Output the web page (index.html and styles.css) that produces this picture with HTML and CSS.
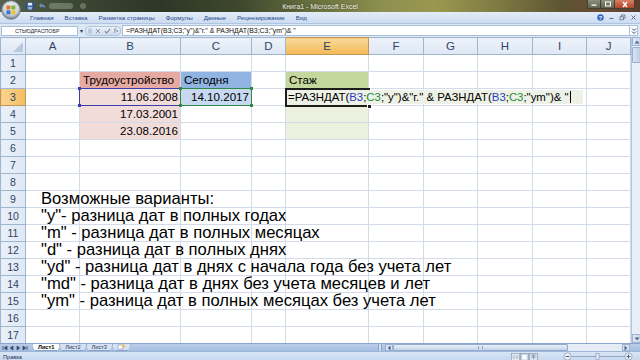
FILE: index.html
```html
<!DOCTYPE html>
<html lang="ru">
<head>
<meta charset="utf-8">
<title>Книга1 - Microsoft Excel</title>
<link rel="stylesheet" href="styles.css">
</head>
<body>
<div class="app">
  <div class="office-btn">
    <svg width="20" height="20" viewBox="0 0 20 20">
      <defs>
        <radialGradient id="og" cx="50%" cy="35%" r="60%">
          <stop offset="0" stop-color="#f4f6f8"/>
          <stop offset="0.7" stop-color="#c9d2da"/>
          <stop offset="1" stop-color="#7f8a94"/>
        </radialGradient>
      </defs>
      <circle cx="10" cy="10" r="9.3" fill="url(#og)" stroke="#6d7780" stroke-width="0.8"/>
      <rect x="5.5" y="5.5" width="4" height="4" fill="#e8742a"/>
      <rect x="10.3" y="5.5" width="4" height="4" fill="#7cb342"/>
      <rect x="5.5" y="10.3" width="4" height="4" fill="#2f7bd1"/>
      <rect x="10.3" y="10.3" width="4" height="4" fill="#f2c230"/>
    </svg>
  </div>

  <header class="titlebar">
    <div class="qat">
      <svg width="8" height="8" viewBox="0 0 8 8"><rect x="0.5" y="0.5" width="7" height="7" rx="1" fill="#3f6db8" stroke="#1d3d78" stroke-width="0.6"/><rect x="2" y="0.8" width="4" height="2.6" fill="#e9eef6"/><rect x="2" y="5" width="4" height="2.5" fill="#9ab0d0"/></svg>
      <svg width="9" height="8" viewBox="0 0 9 8"><path d="M2 3.5 L4.5 1 L4.5 2.6 C7 2.6 8.3 4 8.3 6.8 C7.4 5.2 6.3 4.6 4.5 4.6 L4.5 6 Z" fill="#6f8fbf"/></svg>
      <span class="qat-blur"></span>
      <span class="qat-sep"></span>
    </div>
    <div class="title">Книга1 - Microsoft Excel</div>
    <div class="winctl">
      <span class="wbtn"><svg width="8" height="6" viewBox="0 0 8 6"><rect x="1.5" y="3.5" width="5" height="1.3" fill="#fff"/></svg></span>
      <span class="wbtn"><svg width="8" height="6" viewBox="0 0 8 6"><rect x="1.5" y="1" width="5" height="4" fill="none" stroke="#fff" stroke-width="1"/></svg></span>
      <span class="wbtn close"><svg width="10" height="7" viewBox="0 0 10 7"><path d="M3 1 L7 6 M7 1 L3 6" stroke="#fff" stroke-width="1.4"/></svg></span>
    </div>
  </header>

  <nav class="ribbon">
    <div class="rtabs">
      <span>Главная</span>
      <span>Вставка</span>
      <span>Разметка страницы</span>
      <span>Формулы</span>
      <span>Данные</span>
      <span>Рецензирование</span>
      <span>Вид</span>
    </div>
    <div class="rctl">
      <svg width="7" height="7" viewBox="0 0 7 7"><circle cx="3.5" cy="3.5" r="3.2" fill="#2f63c0"/><text x="3.5" y="5.6" font-size="5.5" font-family="Liberation Sans, sans-serif" font-weight="bold" fill="#fff" text-anchor="middle">?</text></svg>
      <svg width="7" height="7" viewBox="0 0 7 7"><rect x="1.5" y="4" width="4" height="1" fill="#5b6f8c"/></svg>
      <svg width="7" height="7" viewBox="0 0 7 7"><rect x="2.5" y="1" width="3.5" height="3" fill="none" stroke="#5b6f8c" stroke-width="0.8"/><rect x="1" y="2.8" width="3.5" height="3" fill="#dbe6f4" stroke="#5b6f8c" stroke-width="0.8"/></svg>
      <svg width="7" height="7" viewBox="0 0 7 7"><path d="M1.5 1.5 L5.5 5.5 M5.5 1.5 L1.5 5.5" stroke="#5b6f8c" stroke-width="1"/></svg>
    </div>
  </nav>

  <div class="fbar">
    <div class="namebox">СТЬЮДРАСПОБР</div>
    <span class="nbarrow">▾</span>
    <div class="fbtns">
      <span class="grip"></span>
      <svg width="6" height="6" viewBox="0 0 6 6"><path d="M1 1 L5 5 M5 1 L1 5" stroke="#8a94a3" stroke-width="1"/></svg>
      <svg width="7" height="6" viewBox="0 0 7 6"><path d="M0.8 3.2 L2.6 5 L6.2 0.8" stroke="#7f8896" stroke-width="1.1" fill="none"/></svg>
      <span class="fx"><i>f</i><sub>x</sub></span>
    </div>
    <div class="finput">=РАЗНДАТ(B3;C3;"y")&amp;"г." &amp; РАЗНДАТ(B3;C3;"ym")&amp; "</div>
    <div class="fexp"><svg width="6" height="8" viewBox="0 0 6 8"><path d="M1 1.5 L3 3.5 L5 1.5 M1 4.5 L3 6.5 L5 4.5" stroke="#3b4a60" stroke-width="1" fill="none"/></svg></div>
  </div>

  <div class="sheet">
    <table class="grid">
      <colgroup>
        <col class="c-rh"><col class="c-a"><col class="c-b"><col class="c-c"><col class="c-d"><col class="c-e"><col class="c-f"><col class="c-g"><col class="c-h"><col class="c-i"><col class="c-j">
      </colgroup>
      <thead>
        <tr>
          <th class="corner"><span class="tri"></span></th>
          <th>A</th><th>B</th><th>C</th><th>D</th><th class="hl">E</th><th>F</th><th>G</th><th>H</th><th>I</th><th>J</th>
        </tr>
      </thead>
      <tbody>
        <tr><th>1</th><td></td><td></td><td></td><td></td><td></td><td></td><td></td><td></td><td></td><td></td></tr>
        <tr><th>2</th><td></td><td class="red-h">Трудоустройство</td><td class="blue-h">Сегодня</td><td></td><td class="green-h">Стаж</td><td></td><td></td><td></td><td></td><td></td></tr>
        <tr><th class="hl">3</th><td></td>
          <td class="red-l num ref"><span class="refbox refb"><i class="k tl"></i><i class="k tr"></i><i class="k bl"></i><i class="k br"></i></span>11.06.2008</td>
          <td class="blue-l num ref"><span class="refbox refc"><i class="k tl"></i><i class="k tr"></i><i class="k bl"></i><i class="k br"></i></span>14.10.2017</td>
          <td></td>
          <td class="green-l active"><span class="activebox"></span><span class="fillhandle"></span><div class="editor">=РАЗНДАТ(<b class="rb">B3</b>;<b class="rc">C3</b>;"y")&amp;"г." &amp; РАЗНДАТ(<b class="rb">B3</b>;<b class="rc">C3</b>;"ym")&amp; "<span class="caret"></span></div></td>
          <td></td><td></td><td></td><td></td><td></td></tr>
        <tr><th>4</th><td></td><td class="red-l num">17.03.2001</td><td></td><td></td><td class="green-l"></td><td></td><td></td><td></td><td></td><td></td></tr>
        <tr><th>5</th><td></td><td class="red-l num">23.08.2016</td><td></td><td></td><td class="green-l"></td><td></td><td></td><td></td><td></td><td></td></tr>
        <tr><th>6</th><td></td><td></td><td></td><td></td><td></td><td></td><td></td><td></td><td></td><td></td></tr>
        <tr><th>7</th><td></td><td></td><td></td><td></td><td></td><td></td><td></td><td></td><td></td><td></td></tr>
        <tr><th>8</th><td></td><td></td><td></td><td></td><td></td><td></td><td></td><td></td><td></td><td></td></tr>
        <tr><th>9</th><td class="note">Возможные варианты:</td><td></td><td></td><td></td><td></td><td></td><td></td><td></td><td></td><td></td></tr>
        <tr><th>10</th><td class="note">"y"- разница дат в полных годах</td><td></td><td></td><td></td><td></td><td></td><td></td><td></td><td></td><td></td></tr>
        <tr><th>11</th><td class="note">"m" - разница дат в полных месяцах</td><td></td><td></td><td></td><td></td><td></td><td></td><td></td><td></td><td></td></tr>
        <tr><th>12</th><td class="note">"d" - разница дат в полных днях</td><td></td><td></td><td></td><td></td><td></td><td></td><td></td><td></td><td></td></tr>
        <tr><th>13</th><td class="note">"yd" - разница дат в днях с начала года без учета лет</td><td></td><td></td><td></td><td></td><td></td><td></td><td></td><td></td><td></td></tr>
        <tr><th>14</th><td class="note">"md" - разница дат в днях без учета месяцев и лет</td><td></td><td></td><td></td><td></td><td></td><td></td><td></td><td></td><td></td></tr>
        <tr><th>15</th><td class="note">"ym" - разница дат в полных месяцах без учета лет</td><td></td><td></td><td></td><td></td><td></td><td></td><td></td><td></td><td></td></tr>
        <tr><th>16</th><td></td><td></td><td></td><td></td><td></td><td></td><td></td><td></td><td></td><td></td></tr>
        <tr><th>17</th><td></td><td></td><td></td><td></td><td></td><td></td><td></td><td></td><td></td><td></td></tr>
      </tbody>
    </table>
    <div class="vscroll">
      <span class="sbtn"><svg width="6" height="4" viewBox="0 0 6 4"><path d="M0.5 3.5 L3 0.8 L5.5 3.5 Z" fill="#4d6185"/></svg></span>
      <span class="vthumb"></span>
      <span class="vtrack"></span>
      <span class="sbtn"><svg width="6" height="4" viewBox="0 0 6 4"><path d="M0.5 0.5 L3 3.2 L5.5 0.5 Z" fill="#4d6185"/></svg></span>
    </div>
  </div>

  <div class="tabbar">
    <div class="tabnav">
      <svg width="28" height="6" viewBox="0 0 28 6"><path d="M1 1 V5 M5 1 L2.2 3 L5 5 Z M11 1 L8.2 3 L11 5 Z M15 1 L17.8 3 L15 5 Z M21 1 L23.8 3 L21 5 Z M25 1 V5" stroke="#3c4f70" stroke-width="0.8" fill="#3c4f70"/></svg>
    </div>
    <div class="tabs">
      <span class="tab on">Лист1</span>
      <span class="tab">Лист2</span>
      <span class="tab">Лист3</span>
      <span class="tab add"><svg width="9" height="6" viewBox="0 0 9 6"><rect x="1" y="1" width="5" height="4" fill="#fff" stroke="#7f93b3" stroke-width="0.6"/><circle cx="6.5" cy="2" r="1.6" fill="#f2b84a"/></svg></span>
    </div>
    <div class="hscroll">
      <span class="hsplit"></span>
      <span class="hbtn"><svg width="4" height="6" viewBox="0 0 4 6"><path d="M3.5 0.5 L0.8 3 L3.5 5.5 Z" fill="#4d6185"/></svg></span>
      <span class="hthumb"><i></i></span>
      <span class="htrack"></span>
      <span class="hbtn"><svg width="4" height="6" viewBox="0 0 4 6"><path d="M0.5 0.5 L3.2 3 L0.5 5.5 Z" fill="#4d6185"/></svg></span>
    </div>
  </div>

  <footer class="status">
    <span class="mode">Правка</span>
    <div class="views">
      <svg width="28" height="8" viewBox="0 0 28 8"><rect x="0.5" y="0.5" width="8" height="7" fill="#f4f7fb" stroke="#7d8fab" stroke-width="0.6"/><path d="M3 1 V7 M6 1 V7 M1 3 H8 M1 5 H8" stroke="#8b9bb5" stroke-width="0.5"/><rect x="9.5" y="0.5" width="8" height="7" fill="#c9d6e6" stroke="#7d8fab" stroke-width="0.6"/><rect x="11.5" y="2" width="4" height="4.5" fill="#fff"/><rect x="18.5" y="0.5" width="8" height="7" fill="#d5e0ee" stroke="#7d8fab" stroke-width="0.6"/><path d="M20.5 2 H24.5 M20.5 4 H24.5 M22.5 2 V6" stroke="#6b7c98" stroke-width="0.7"/></svg>
    </div>
    <div class="zoomsl">
      <svg width="70" height="9" viewBox="0 0 70 9"><circle cx="4.5" cy="4.5" r="3.6" fill="#eef3fa" stroke="#8294b2" stroke-width="0.7"/><rect x="2.6" y="4" width="3.8" height="1" fill="#4a5d7e"/><rect x="9" y="4.2" width="53" height="0.8" fill="#8a9bb6"/><rect x="34.5" y="2" width="1.2" height="5" fill="#8a9bb6"/><rect x="33" y="1.3" width="3" height="6.4" fill="#e8eef7" stroke="#6a7d9c" stroke-width="0.5"/><circle cx="65.5" cy="4.5" r="3.6" fill="#eef3fa" stroke="#8294b2" stroke-width="0.7"/><path d="M63.6 4.5 H67.4 M65.5 2.6 V6.4" stroke="#4a5d7e" stroke-width="1"/></svg>
    </div>
  </footer>
</div>
</body>
</html>
```

FILE: styles.css
```css
* { box-sizing: border-box; }
html, body { margin: 0; padding: 0; }
body {
  width: 640px;
  height: 360px;
  overflow: hidden;
  background: #fff;
  font-family: "Liberation Sans", Arial, sans-serif;
}
.app {
  position: relative;
  width: 640px;
  height: 360px;
  display: flex;
  flex-direction: column;
  background: #dbe6f4;
}

/* office button overlays title and ribbon */
.office-btn {
  position: absolute;
  left: 1px;
  top: 0;
  width: 20px;
  height: 20px;
  z-index: 5;
}
.office-btn svg { display: block; }

/* title bar */
.titlebar {
  height: 12px;
  flex: none;
  display: grid;
  grid-template-columns: 1fr auto 1fr;
  align-items: center;
  background: linear-gradient(90deg, #56624f 0%, #3b4634 12%, #2c3726 25%, #40492e 38%, #6d7440 50%, #8e9050 60%, #9a984f 68%, #7d7a43 78%, #5c5432 88%, #6d4a34 94%, #5a3d2e 100%);
}
.qat {
  display: flex;
  align-items: center;
  gap: 3px;
  padding-left: 26px;
}
.qat svg { display: block; }
.qat-blur {
  width: 24px;
  height: 6px;
  border-radius: 3px;
  background: rgba(160, 175, 150, 0.45);
}
.qat-sep {
  width: 6px;
  height: 6px;
  border-radius: 3px;
  background: rgba(190, 200, 170, 0.35);
  margin-left: 4px;
}
.title {
  color: #f3f3ea;
  font-size: 7px;
  white-space: nowrap;
  text-shadow: 0 0 2px rgba(0, 0, 0, 0.6);
}
.winctl {
  justify-self: end;
  align-self: start;
  display: flex;
  padding-right: 5px;
}
.wbtn {
  width: 14px;
  height: 9px;
  display: flex;
  align-items: center;
  justify-content: center;
  background: linear-gradient(#8c907a, #5f624f);
  border: 1px solid #40432f;
  border-top: 0;
}
.wbtn + .wbtn { border-left: 0; }
.wbtn.close {
  width: 20px;
  background: linear-gradient(#d88064, #b0432b);
  border-bottom-right-radius: 2px;
}
.wbtn svg { display: block; }

/* ribbon tabs row */
.ribbon {
  height: 12px;
  flex: none;
  display: flex;
  align-items: center;
  justify-content: space-between;
  background: linear-gradient(#e3ecf8, #cddcf0);
  border-bottom: 1px solid #aec4e0;
}
.rtabs {
  display: flex;
  gap: 11px;
  padding-left: 30px;
  font-size: 6.2px;
  color: #1e4a8c;
  white-space: nowrap;
}
.rctl {
  display: flex;
  gap: 4px;
  padding-right: 3px;
}
.rctl svg { display: block; }

/* formula bar */
.fbar {
  height: 13px;
  flex: none;
  display: flex;
  align-items: center;
  padding: 1px 2px 1px 1px;
  background: #dde8f5;
}
.namebox {
  width: 77px;
  height: 10px;
  background: #fff;
  border: 1px solid #a9bedb;
  font-size: 5.3px;
  line-height: 8px;
  color: #1c2a3f;
  padding-left: 13px;
  white-space: nowrap;
}
.nbarrow {
  width: 7px;
  font-size: 6px;
  color: #2b3a52;
  text-align: center;
}
.fbtns {
  width: 36px;
  height: 10px;
  display: flex;
  align-items: center;
  gap: 3px;
  padding-left: 2px;
  background: linear-gradient(#e9f0f9, #cfdcee);
  border: 1px solid #b2c5df;
  border-radius: 4px;
}
.fbtns svg { display: block; }
.grip {
  width: 4px;
  height: 6px;
  border-radius: 2px;
  background: #b9c9df;
}
.fx {
  font-family: "Liberation Serif", serif;
  font-size: 6.5px;
  color: #4a5568;
  line-height: 6px;
}
.fx sub { font-size: 5px; vertical-align: 0; }
.finput {
  flex: 1;
  height: 11px;
  margin-left: 1px;
  background: #fff;
  border: 1px solid #a9bedb;
  font-size: 6.9px;
  line-height: 9px;
  color: #111;
  padding-left: 3px;
  white-space: nowrap;
}
.fexp {
  width: 8px;
  height: 11px;
  display: flex;
  align-items: center;
  justify-content: center;
  background: #fff;
  border: 1px solid #a9bedb;
  border-left: 0;
}

/* sheet */
.sheet {
  height: 306px;
  flex: none;
  display: flex;
  overflow: hidden;
  background: #fff;
}
.grid {
  width: 630px;
  flex: none;
  table-layout: fixed;
  border-collapse: collapse;
  font-size: 11.6px;
  color: #000;
}
.c-rh { width: 25px; }
.c-a { width: 54px; }
.c-b { width: 101px; }
.c-c { width: 71px; }
.c-d { width: 34px; }
.c-e { width: 83px; }
.c-f { width: 55px; }
.c-g { width: 54px; }
.c-h { width: 55px; }
.c-i { width: 54px; }
.c-j { width: 44px; }

.grid tr { height: 17px; }
.grid td {
  border: 1px solid #d4dbe8;
  padding: 0 2px 1px 3px;
  line-height: 15px;
  white-space: nowrap;
  vertical-align: bottom;
  overflow: visible;
}
.grid th {
  font-weight: normal;
  font-size: 11.5px;
  color: #2f4463;
  background: linear-gradient(#eef3fa, #dde7f4);
  border: 1px solid #9eb6ce;
  padding: 0;
  line-height: 15px;
  text-align: center;
}
.grid tbody th {
  background: linear-gradient(90deg, #e9f0f9, #dfe8f4);
  font-size: 10.5px;
}
.grid th.hl {
  background: linear-gradient(#f9d99b, #f3b955);
  border-color: #c2955a;
}
.grid tbody th.hl {
  background: linear-gradient(90deg, #fad493, #f4bd5f);
}
.corner {
  position: relative;
}
.tri {
  position: absolute;
  right: 2px;
  bottom: 2px;
  width: 0;
  height: 0;
  border-left: 10px solid transparent;
  border-bottom: 10px solid #b9c8dc;
}

.red-h { background: #e6aaa2; }
.red-l { background: #f2dcda; }
.blue-h { background: #8fb4e2; }
.blue-l { background: #c6d9f0; }
.green-h { background: #c4d79c; }
.green-l { background: #ebf1de; }
.num { text-align: right; }

.ref { position: relative; }
.refbox {
  position: absolute;
  left: -1px;
  top: -1px;
  right: -1px;
  bottom: -1px;
  border: 1px solid #3a3fb0;
}
.refbox.refc { border-color: #2f8a45; }
.k {
  position: absolute;
  width: 3px;
  height: 3px;
  background: #3a3fb0;
}
.refc .k { background: #2f8a45; }
.k.tl { left: -2px; top: -2px; }
.k.tr { right: -2px; top: -2px; }
.k.bl { left: -2px; bottom: -2px; }
.k.br { right: -2px; bottom: -2px; }

.active { position: relative; }
.activebox {
  position: absolute;
  left: -1px;
  top: -1px;
  width: 85px;
  bottom: -2px;
  border: 2px solid #1d1d1d;
}
.fillhandle {
  position: absolute;
  left: 81px;
  bottom: -4px;
  width: 5px;
  height: 5px;
  background: #1d1d1d;
  border: 1px solid #fff;
}
.editor {
  position: absolute;
  left: 1px;
  top: 1px;
  bottom: 1px;
  width: 296px;
  background: #eef2e6;
  padding-left: 1px;
  line-height: 15px;
  font-size: 11.4px;
  white-space: nowrap;
  z-index: 2;
}
.editor b { font-weight: normal; }
.rb { color: #2a3fc0; }
.rc { color: #1f8a3a; }
.caret {
  display: inline-block;
  width: 1px;
  height: 12px;
  background: #000;
  vertical-align: -2px;
  margin-left: 1px;
}

.grid td.note {
  font-size: 16.6px;
  line-height: 15px;
  padding-left: 15px;
}

/* vertical scrollbar */
.vscroll {
  width: 10px;
  flex: none;
  display: flex;
  flex-direction: column;
  background: #e8eef7;
  border-left: 1px solid #b4c6de;
}
.sbtn {
  height: 9px;
  flex: none;
  display: flex;
  align-items: center;
  justify-content: center;
  background: linear-gradient(90deg, #dfe8f4, #c7d6ea);
  border: 1px solid #9fb3d0;
}
.sbtn svg { display: block; }
.vthumb {
  height: 16px;
  flex: none;
  margin: 1px 0;
  background: linear-gradient(90deg, #dbe5f3, #bccde5);
  border: 1px solid #9aafcd;
  border-radius: 1px;
}
.vtrack { flex: 1; }

/* sheet tabs bar */
.tabbar {
  height: 8px;
  flex: none;
  display: flex;
  align-items: stretch;
  background: linear-gradient(#b9cde9, #a6bfe2);
  border-top: 1px solid #8aa6cc;
}
.tabnav {
  width: 32px;
  display: flex;
  align-items: center;
  padding-left: 2px;
}
.tabnav svg { display: block; }
.tabs {
  display: flex;
  align-items: stretch;
  width: 346px;
  font-size: 5.6px;
  line-height: 7px;
}
.tab {
  padding: 0 5px;
  color: #1e3254;
  background: #d6e2f2;
  border: 1px solid #8aa3c8;
  border-top: 0;
  margin-right: -1px;
  clip-path: polygon(0 0, 100% 0, calc(100% - 3px) 100%, 3px 100%);
}
.tab.on {
  background: #fff;
  font-weight: bold;
  color: #000;
}
.tab.add {
  display: flex;
  align-items: center;
  padding: 0 4px;
}
.tab svg { display: block; }
.hscroll {
  flex: 1;
  display: flex;
  align-items: stretch;
  padding-right: 10px;
}
.hsplit {
  width: 4px;
  margin-right: 3px;
  background: #d5e0ef;
  border-left: 1px solid #8ba5c9;
  border-right: 1px solid #8ba5c9;
}
.hbtn {
  width: 8px;
  display: flex;
  align-items: center;
  justify-content: center;
  background: #d7e2f1;
  border: 1px solid #9fb3d0;
}
.hthumb {
  width: 175px;
  display: flex;
  align-items: center;
  justify-content: center;
  background: linear-gradient(#e9eff8, #c4d4ea);
  border: 1px solid #94abcc;
  border-radius: 2px;
}
.hthumb i {
  width: 5px;
  height: 3px;
  border-left: 1px solid #8aa0c2;
  border-right: 1px solid #8aa0c2;
}
.htrack {
  flex: 1;
  background: #e5ecf6;
}

/* status bar */
.status {
  flex: 1;
  display: flex;
  align-items: center;
  background: linear-gradient(#d8e5f6, #c5d7ef);
  border-top: 1px solid #9db5d6;
  padding-left: 3px;
}
.mode {
  font-size: 5.6px;
  color: #1f3556;
  width: 508px;
}
.views svg, .zoomsl svg { display: block; }
.views { width: 50px; }
.zoomsl { margin-left: 2px; }
```
